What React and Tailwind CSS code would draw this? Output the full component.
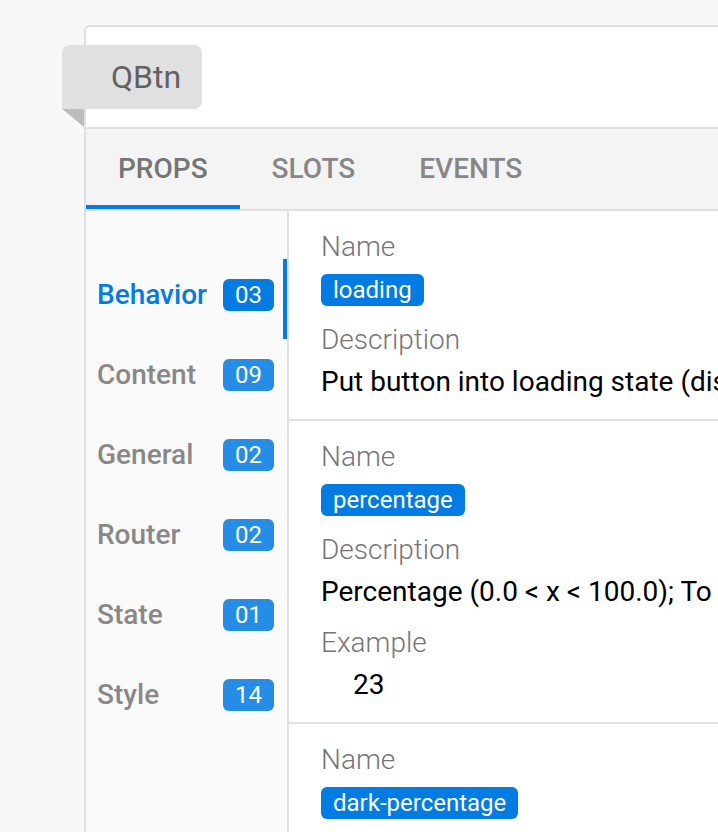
import React from "react";

const groups = [
  { name: "Behavior", count: "03", active: true },
  { name: "Content", count: "09" },
  { name: "General", count: "02" },
  { name: "Router", count: "02" },
  { name: "State", count: "01" },
  { name: "Style", count: "14" },
];

const props = [
  {
    name: "loading",
    description:
      "Put button into loading state (displays a QSpinner -- can be overridden by using a 'loading' slot)",
  },
  {
    name: "percentage",
    description:
      "Percentage (0.0 < x < 100.0); To be used along 'loading' prop; Display a progress bar on the background",
    example: "23",
  },
  {
    name: "dark-percentage",
    description:
      "Progress bar on the background should have dark color; To be used along with 'percentage' and 'loading' props",
  },
];

const Field = ({ label, children }) => (
  <div className="mb-[9px] last:mb-0">
    <div className="text-[28px] font-light leading-[42px] text-[#757575]">{label}</div>
    {children}
  </div>
);

const PropEntry = ({ prop }) => (
  <div className="border-b-2 border-[#e0e0e0] px-8 pb-4 pt-[15px]">
    <Field label="Name">
      <div className="flex h-[42px] items-center pt-[2px]">
        <span className="flex h-8 items-center rounded-md bg-[#027be3] px-3 text-[24px] leading-none text-white">
          {prop.name}
        </span>
      </div>
    </Field>
    <Field label="Description">
      <div className="whitespace-nowrap text-[28px] leading-[42px] text-black">
        {prop.description}
      </div>
    </Field>
    {prop.example && (
      <Field label="Example">
        <div className="pl-8 text-[28px] leading-[42px] text-black">{prop.example}</div>
      </Field>
    )}
  </div>
);

export default function App() {
  return (
    <div
      className="h-[832px] w-full overflow-hidden bg-[#f8f8f8] pl-[84px] pt-[25px]"
      style={{ fontFamily: "Roboto, 'Liberation Sans', sans-serif" }}
    >
      <div className="min-h-[900px] w-[1200px] rounded-tl-[6px] border-2 border-[#e0e0e0] bg-white">
        {/* Header with tag */}
        <div className="flex h-[102px] items-center border-b-2 border-[#e0e0e0]">
          <div className="relative -ml-[24px] flex h-16 items-center rounded-r-lg rounded-tl-lg bg-[#e0e0e0] pl-[49px] pr-[21px]">
            <span className="text-[32px] leading-none text-[#616161]">QBtn</span>
            <svg
              className="absolute left-0 top-full"
              width="22"
              height="18"
              viewBox="0 0 22 18"
            >
              <polygon points="0,0 22,0 22,18" fill="#bdbdbd" />
            </svg>
          </div>
        </div>

        {/* Tabs */}
        <div className="flex h-[82px] border-b-2 border-[#e0e0e0] bg-[#f4f4f4]">
          {["Props", "Slots", "Events"].map((tab, i) => (
            <div
              key={tab}
              className={`relative flex items-center px-8 text-[28px] font-medium uppercase text-[#757575] ${
                i === 0 ? "" : "opacity-85"
              }`}
            >
              {tab}
              {i === 0 && (
                <div className="absolute bottom-0 left-0 right-0 h-[4px] bg-[#027be3]" />
              )}
            </div>
          ))}
        </div>

        {/* Body */}
        <div className="flex">
          <div className="min-h-[700px] w-[203px] shrink-0 border-r-2 border-[#e0e0e0] bg-[#fafafa] pt-[48px]">
            {groups.map((g) => (
              <div
                key={g.name}
                className={`relative flex h-[80px] items-center justify-between pb-2 pl-[11px] pr-[13px] ${
                  g.active ? "" : "opacity-85"
                }`}
              >
                <span
                  className={`text-[28px] font-medium ${
                    g.active ? "text-[#027be3]" : "text-[#757575]"
                  }`}
                >
                  {g.name}
                </span>
                <span className="flex h-8 items-center rounded-md bg-[#027be3] px-3 text-[24px] leading-none text-white">
                  {g.count}
                </span>
                {g.active && (
                  <div className="absolute bottom-0 right-0 top-0 w-[4px] bg-[#027be3]" />
                )}
              </div>
            ))}
          </div>

          <div className="min-w-0 flex-1">
            {props.map((p) => (
              <PropEntry key={p.name} prop={p} />
            ))}
          </div>
        </div>
      </div>
    </div>
  );
}
